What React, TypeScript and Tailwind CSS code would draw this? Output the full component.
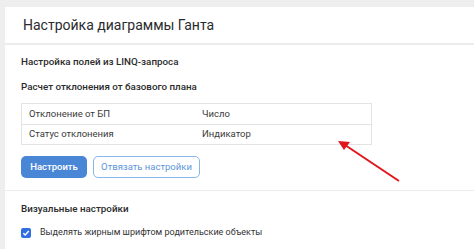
import React from 'react';

const rows = [
  { field: 'Отклонение от БП', type: 'Число' },
  { field: 'Статус отклонения', type: 'Индикатор' },
];

export default function App() {
  return (
    <div
      className="relative w-[474px] h-[249px] overflow-hidden bg-[#eeeeee] pt-[7px] pl-[5px]"
      style={{ fontFamily: 'Roboto, "Noto Sans", sans-serif' }}
    >
      <div className="bg-white h-full">
        {/* Header */}
        <div className="h-[38px] flex items-center px-[18px] border-b-2 border-[#ececec]">
          <h1 className="text-[14px] text-[#2a2b2e] leading-none">Настройка диаграммы Ганта</h1>
        </div>

        {/* LINQ fields section */}
        <div className="px-[16px] pt-[9px] pb-[12px] border-b border-[#ececec]">
          <p className="text-[9.8px] leading-[16px] font-medium text-[#2b2b2b]">Настройка полей из LINQ-запроса</p>
          <p className="mt-[9px] text-[9.8px] leading-[16px] font-medium text-[#2b2b2b]">
            Расчет отклонения от базового плана
          </p>

          <div className="mt-[8px] w-[351px] border border-[#e3e3e3]">
            {rows.map((r, i) => (
              <div
                key={r.field}
                className={`flex items-center h-[20px] text-[9.5px] text-[#3a3a3a] ${i > 0 ? 'border-t border-[#e3e3e3]' : ''}`}
              >
                <span className="w-[180px] pl-[7px]">{r.field}</span>
                <span>{r.type}</span>
              </div>
            ))}
          </div>

          <div className="mt-[11px] flex gap-[6px]">
            <button className="h-[22px] w-[66px] rounded-[5px] bg-[#4a86d6] text-white text-[9.5px] font-medium">
              Настроить
            </button>
            <button className="h-[22px] w-[107px] rounded-[5px] border border-[#86b6ea] bg-white text-[#5b95dc] text-[9.5px] whitespace-nowrap">
              Отвязать настройки
            </button>
          </div>
        </div>

        {/* Visual settings */}
        <div className="px-[16px] pt-[10px]">
          <p className="text-[9.8px] leading-[16px] font-medium text-[#2b2b2b]">Визуальные настройки</p>
          <label className="mt-[9px] flex items-center gap-[9px] text-[9px] text-[#333]">
            <span className="w-[10px] h-[10px] rounded-[2px] bg-[#2f6fe0] flex items-center justify-center">
              <svg width="8" height="8" viewBox="0 0 8 8">
                <path d="M1.3 4.2 L3.2 6 L6.8 2" stroke="white" strokeWidth="1.5" fill="none" />
              </svg>
            </span>
            Выделять жирным шрифтом родительские объекты
          </label>
        </div>
      </div>

      {/* Annotation arrow */}
      <svg className="absolute left-0 top-0 pointer-events-none" width="474" height="249">
        <line x1="399" y1="181" x2="345" y2="145" stroke="#e0161b" strokeWidth="2" />
        <polygon points="338,141 350,142 344,150" fill="#e0161b" />
      </svg>
    </div>
  );
}
